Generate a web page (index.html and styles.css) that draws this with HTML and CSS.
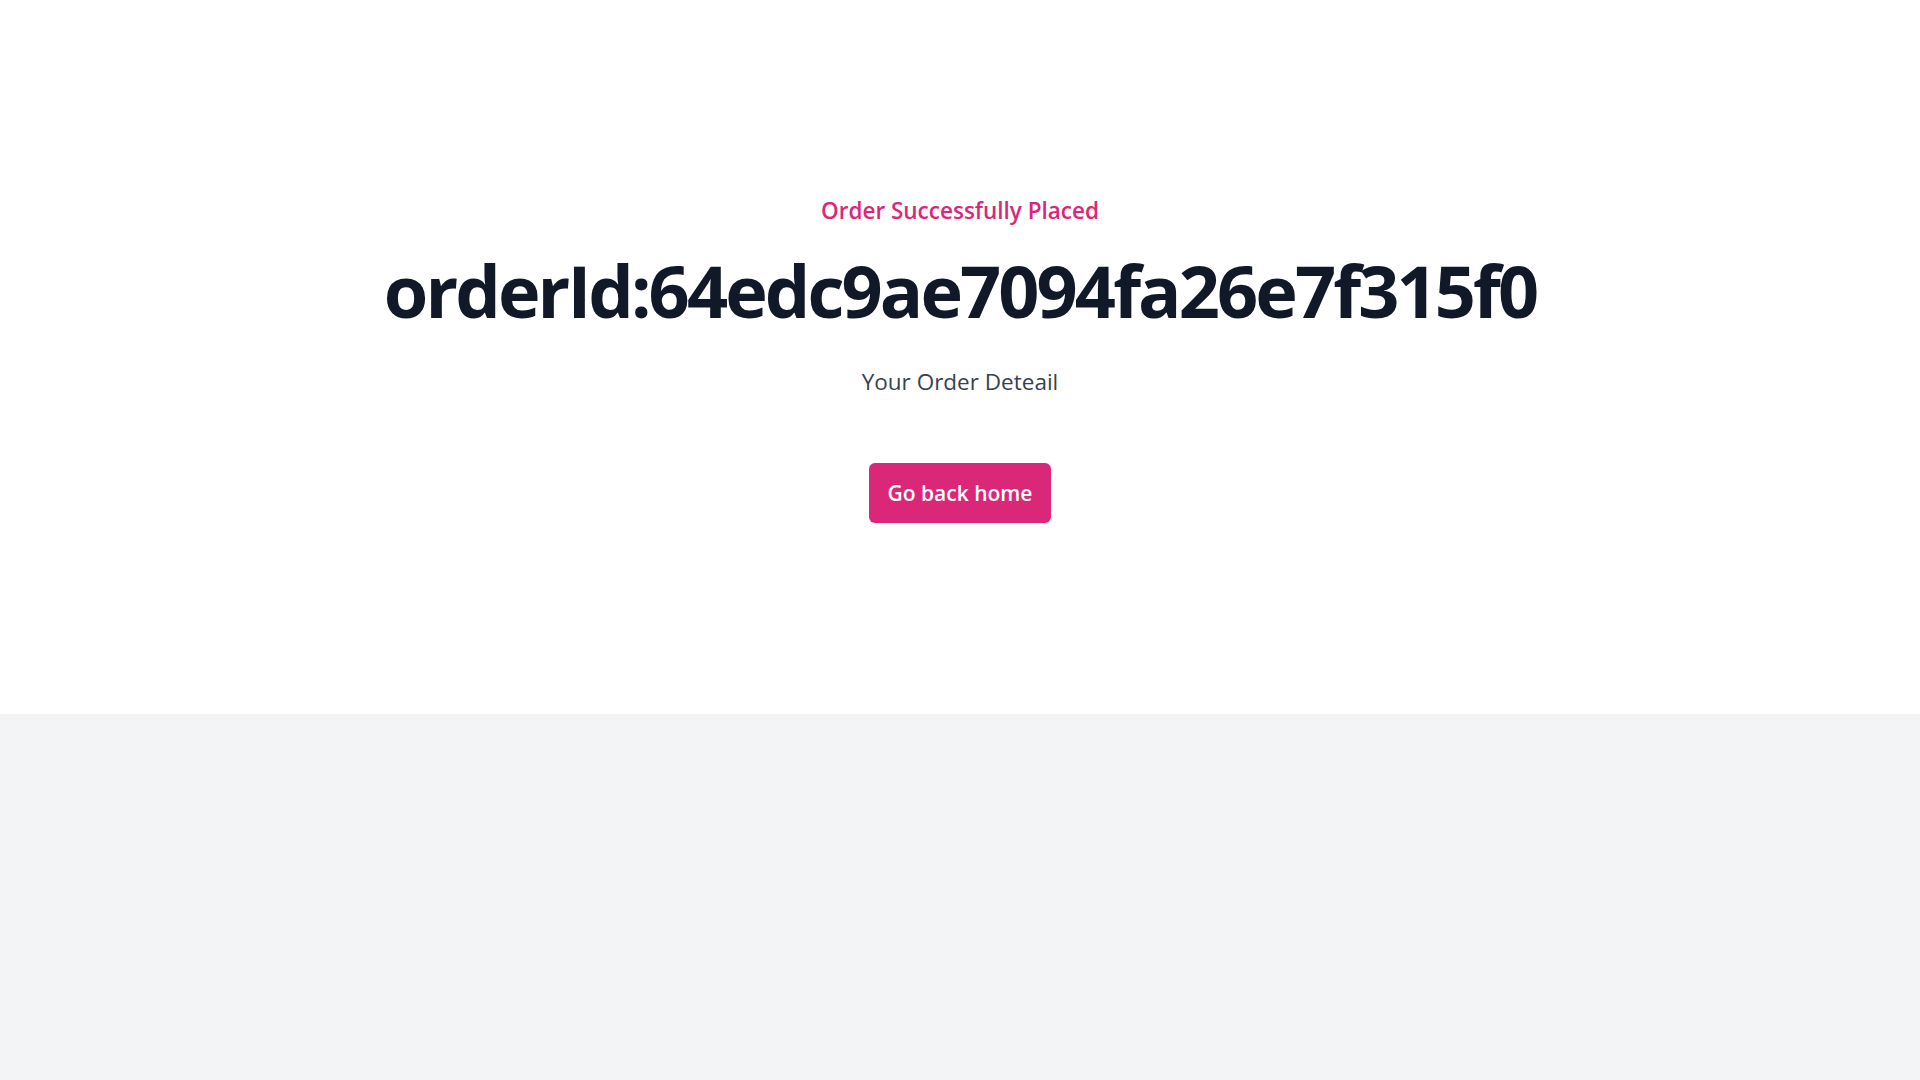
FILE: index.html
```html
<!DOCTYPE html>
<html lang="en">
<head>
<meta charset="utf-8">
<title>Order Successfully Placed</title>
<link rel="stylesheet" href="styles.css">
</head>
<body>
<main class="hero">
  <div class="content">
    <p class="eyebrow">Order Successfully Placed</p>
    <h1 class="title">orderId:64edc9ae7094fa26e7f315f0</h1>
    <p class="detail">Your Order Deteail</p>
    <div class="actions">
      <a class="btn" href="#">Go back home</a>
    </div>
  </div>
</main>
</body>
</html>
```
FILE: styles.css
```css
html, body {
  margin: 0;
  padding: 0;
  height: 100%;
}
body {
  background: #f3f4f6;
  font-family: "Open Sans", "Noto Sans", sans-serif;
}
.hero {
  box-sizing: border-box;
  background: #ffffff;
  height: 714px;
  padding-top: 4px;
  display: flex;
  align-items: center;
  justify-content: center;
}
.content {
  text-align: center;
}
.eyebrow {
  margin: 0;
  font-size: 22.5px;
  line-height: 32px;
  font-weight: 600;
  color: #db2777;
}
.title {
  margin: 27px 0 0;
  font-size: 72px;
  line-height: 1;
  font-weight: 700;
  letter-spacing: -2.9px;
  color: #111827;
}
.detail {
  margin: 40px 0 0;
  font-size: 22.5px;
  line-height: 32px;
  color: #374151;
}
.actions {
  margin-top: 65px;
  display: flex;
  justify-content: center;
}
.btn {
  display: inline-block;
  background: #db2777;
  color: #ffffff;
  text-decoration: none;
  font-size: 21px;
  font-weight: 600;
  line-height: 28px;
  padding: 16px 19px;
  border-radius: 6px;
}
```
